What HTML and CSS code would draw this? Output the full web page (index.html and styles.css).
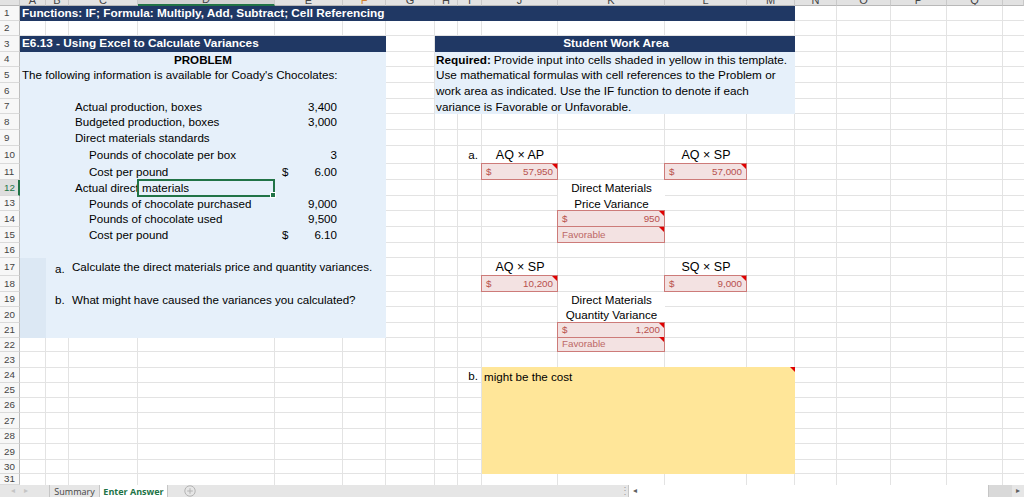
FILE: index.html
```html
<!DOCTYPE html>
<html>
<head>
<meta charset="utf-8">
<link rel="stylesheet" href="styles.css">
</head>
<body>
<div class="sheet">
  <div class="ch corner"></div>
  <div class="ch"><span>A</span></div>
  <div class="ch"><span>B</span></div>
  <div class="ch"><span>C</span></div>
  <div class="ch ch-sel"><span>D</span></div>
  <div class="ch"><span>E</span></div>
  <div class="ch"><span class="orange">F</span></div>
  <div class="ch"><span>G</span></div>
  <div class="ch"><span>H</span></div>
  <div class="ch"><span>I</span></div>
  <div class="ch"><span>J</span></div>
  <div class="ch"><span>K</span></div>
  <div class="ch"><span>L</span></div>
  <div class="ch"><span>M</span></div>
  <div class="ch"><span>N</span></div>
  <div class="ch"><span>O</span></div>
  <div class="ch"><span>P</span></div>
  <div class="ch"><span>Q</span></div>
  <div class="ch"><span></span></div>

  <div class="rh">1</div><div class="rh">2</div><div class="rh">3</div><div class="rh">4</div>
  <div class="rh">5</div><div class="rh">6</div><div class="rh">7</div><div class="rh">8</div>
  <div class="rh">9</div><div class="rh">10</div><div class="rh">11</div><div class="rh rh-sel">12</div>
  <div class="rh">13</div><div class="rh">14</div><div class="rh">15</div><div class="rh">16</div>
  <div class="rh">17</div><div class="rh">18</div><div class="rh">19</div><div class="rh">20</div>
  <div class="rh">21</div><div class="rh">22</div><div class="rh">23</div><div class="rh">24</div>
  <div class="rh">25</div><div class="rh">26</div><div class="rh">27</div><div class="rh">28</div>
  <div class="rh">29</div><div class="rh">30</div><div class="rh">31</div>

  <!-- headers -->
  <div class="cell banner y1 x-am">Functions: IF; Formula: Multiply, Add, Subtract; Cell Referencing</div>
  <div class="cell banner y3 x-af">E6.13 - Using Excel to Calculate Variances</div>
  <div class="cell banner center y3 x-hm">Student Work Area</div>

  <!-- problem panel -->
  <div class="panel y4-21 x-af"></div>
  <div class="panel-dark y17-21 x-a"></div>
  <div class="cell bold center y4 x-af">PROBLEM</div>
  <div class="cell pad2 y5 x-af">The following information is available for Coady's Chocolates:</div>

  <div class="cell ind1 y7 x-cd">Actual production, boxes</div>
  <div class="cell num y7 x-e">3,400</div>
  <div class="cell ind1 y8 x-cd">Budgeted production, boxes</div>
  <div class="cell num y8 x-e">3,000</div>
  <div class="cell ind1 y9 x-cd">Direct materials standards</div>
  <div class="cell ind2 y10 x-cd">Pounds of chocolate per box</div>
  <div class="cell num y10 x-e">3</div>
  <div class="cell ind2 y11 x-cd">Cost per pound</div>
  <div class="cell acct y11 x-e"><span>$</span><span>6.00</span></div>
  <div class="cell ind1 y12 x-cd">Actual direct materials</div>
  <div class="cell ind2 y13 x-cd">Pounds of chocolate purchased</div>
  <div class="cell num y13 x-e">9,000</div>
  <div class="cell ind2 y14 x-cd">Pounds of chocolate used</div>
  <div class="cell num y14 x-e">9,500</div>
  <div class="cell ind2 y15 x-cd">Cost per pound</div>
  <div class="cell acct y15 x-e"><span>$</span><span>6.10</span></div>

  <div class="cell letter low y17 x-b">a.</div>
  <div class="cell q y17 x-cf">Calculate the direct materials price and quantity variances.</div>
  <div class="cell letter y19 x-b">b.</div>
  <div class="cell q y19 x-cf">What might have caused the variances you calculated?</div>

  <div class="selection y12 x-d"></div>

  <!-- student work area -->
  <div class="required y4-7 x-hm">
    <div><b>Required:</b> Provide input into cells shaded in yellow in this template.</div>
    <div>Use mathematical formulas with cell references to the Problem or</div>
    <div>work area as indicated. Use the IF function to denote if each</div>
    <div>variance is Favorable or Unfavorable.</div>
  </div>

  <div class="cell label-r y10 x-i">a.</div>
  <div class="cell big center y10 x-j">AQ × AP</div>
  <div class="cell big center y10 x-l">AQ × SP</div>
  <div class="box y11 x-j"><div class="money"><span>$</span><span>57,950</span></div></div>
  <div class="box y11 x-l"><div class="money"><span>$</span><span>57,000</span></div></div>
  <div class="cell white center y12 x-k">Direct Materials</div>
  <div class="cell white center y13 x-k">Price Variance</div>
  <div class="box stack y14-15 x-k">
    <div class="money"><span>$</span><span>950</span></div>
    <div class="money fav">Favorable</div>
  </div>

  <div class="cell big center y17 x-j">AQ × SP</div>
  <div class="cell big center y17 x-l">SQ × SP</div>
  <div class="box y18 x-j"><div class="money"><span>$</span><span>10,200</span></div></div>
  <div class="box y18 x-l"><div class="money"><span>$</span><span>9,000</span></div></div>
  <div class="cell white center y19 x-k">Direct Materials</div>
  <div class="cell white center y20 x-k">Quantity Variance</div>
  <div class="box stack y21-22 x-k">
    <div class="money"><span>$</span><span>1,200</span></div>
    <div class="money fav">Favorable</div>
  </div>

  <div class="cell label-r y24 x-i">b.</div>
  <div class="answer y24-30 x-jm">might be the cost</div>
</div>

<div class="tabs">
  <div class="nav"><span>◂</span><span>▸</span></div>
  <div class="tab">Summary</div>
  <div class="tab active">Enter Answer</div>
  <div class="add">
    <svg width="12" height="12" viewBox="0 0 12 12"><circle cx="6" cy="6" r="5.2" fill="none" stroke="#b4b4b4" stroke-width="1"/><path d="M6 3.2v5.6M3.2 6h5.6" stroke="#b4b4b4" stroke-width="1"/></svg>
  </div>
  <div class="spacer"></div>
  <div class="dots">⋮</div>
  <div class="arrowbox">◂</div>
  <div class="track"><div class="thumb"></div></div>
  <div class="arrowbox right">▸</div>
</div>
</body>
</html>
```

FILE: styles.css
```css
:root {
  --gl: #e3e3e3;
  --navy: #203864;
  --panel: #e6f0fa;
  --pink: #f3e2e2;
  --pinkline: #cd7b79;
  --pinktext: #b8504d;
}
* { box-sizing: border-box; }
html, body { margin: 0; padding: 0; }
body {
  width: 1024px;
  height: 497px;
  overflow: hidden;
  background: #fff;
  font-family: "Liberation Sans", Arial, sans-serif;
  color: #000;
}

.sheet {
  display: grid;
  grid-template-columns: 20px 26px 23px 69px 137px 68px 43px 49px 23px 24px 76px 107px 82px 48px 42px 54px 56px 56px 21px;
  grid-template-rows: 6px 15px 15px 16px 15px 16px 16px 15px 16px 16px 18px 16px 16px 15px 16px 16px 15px 18px 16px 15px 16px 15px 14px 16px 15px 15px 15px 16px 15px 16px 14px 11px;
  height: 485px;
  overflow: hidden;
  background:
    linear-gradient(var(--gl), var(--gl)) 45px 0 / 1px 100% no-repeat,
    linear-gradient(var(--gl), var(--gl)) 68px 0 / 1px 100% no-repeat,
    linear-gradient(var(--gl), var(--gl)) 137px 0 / 1px 100% no-repeat,
    linear-gradient(var(--gl), var(--gl)) 274px 0 / 1px 100% no-repeat,
    linear-gradient(var(--gl), var(--gl)) 342px 0 / 1px 100% no-repeat,
    linear-gradient(var(--gl), var(--gl)) 385px 0 / 1px 100% no-repeat,
    linear-gradient(var(--gl), var(--gl)) 434px 0 / 1px 100% no-repeat,
    linear-gradient(var(--gl), var(--gl)) 457px 0 / 1px 100% no-repeat,
    linear-gradient(var(--gl), var(--gl)) 481px 0 / 1px 100% no-repeat,
    linear-gradient(var(--gl), var(--gl)) 557px 0 / 1px 100% no-repeat,
    linear-gradient(var(--gl), var(--gl)) 664px 0 / 1px 100% no-repeat,
    linear-gradient(var(--gl), var(--gl)) 746px 0 / 1px 100% no-repeat,
    linear-gradient(var(--gl), var(--gl)) 794px 0 / 1px 100% no-repeat,
    linear-gradient(var(--gl), var(--gl)) 836px 0 / 1px 100% no-repeat,
    linear-gradient(var(--gl), var(--gl)) 890px 0 / 1px 100% no-repeat,
    linear-gradient(var(--gl), var(--gl)) 946px 0 / 1px 100% no-repeat,
    linear-gradient(var(--gl), var(--gl)) 1002px 0 / 1px 100% no-repeat,
    linear-gradient(var(--gl), var(--gl)) 0 20px / 100% 1px no-repeat,
    linear-gradient(var(--gl), var(--gl)) 0 35px / 100% 1px no-repeat,
    linear-gradient(var(--gl), var(--gl)) 0 51px / 100% 1px no-repeat,
    linear-gradient(var(--gl), var(--gl)) 0 66px / 100% 1px no-repeat,
    linear-gradient(var(--gl), var(--gl)) 0 82px / 100% 1px no-repeat,
    linear-gradient(var(--gl), var(--gl)) 0 98px / 100% 1px no-repeat,
    linear-gradient(var(--gl), var(--gl)) 0 113px / 100% 1px no-repeat,
    linear-gradient(var(--gl), var(--gl)) 0 129px / 100% 1px no-repeat,
    linear-gradient(var(--gl), var(--gl)) 0 145px / 100% 1px no-repeat,
    linear-gradient(var(--gl), var(--gl)) 0 163px / 100% 1px no-repeat,
    linear-gradient(var(--gl), var(--gl)) 0 179px / 100% 1px no-repeat,
    linear-gradient(var(--gl), var(--gl)) 0 195px / 100% 1px no-repeat,
    linear-gradient(var(--gl), var(--gl)) 0 210px / 100% 1px no-repeat,
    linear-gradient(var(--gl), var(--gl)) 0 226px / 100% 1px no-repeat,
    linear-gradient(var(--gl), var(--gl)) 0 242px / 100% 1px no-repeat,
    linear-gradient(var(--gl), var(--gl)) 0 257px / 100% 1px no-repeat,
    linear-gradient(var(--gl), var(--gl)) 0 275px / 100% 1px no-repeat,
    linear-gradient(var(--gl), var(--gl)) 0 291px / 100% 1px no-repeat,
    linear-gradient(var(--gl), var(--gl)) 0 306px / 100% 1px no-repeat,
    linear-gradient(var(--gl), var(--gl)) 0 322px / 100% 1px no-repeat,
    linear-gradient(var(--gl), var(--gl)) 0 337px / 100% 1px no-repeat,
    linear-gradient(var(--gl), var(--gl)) 0 351px / 100% 1px no-repeat,
    linear-gradient(var(--gl), var(--gl)) 0 367px / 100% 1px no-repeat,
    linear-gradient(var(--gl), var(--gl)) 0 382px / 100% 1px no-repeat,
    linear-gradient(var(--gl), var(--gl)) 0 397px / 100% 1px no-repeat,
    linear-gradient(var(--gl), var(--gl)) 0 412px / 100% 1px no-repeat,
    linear-gradient(var(--gl), var(--gl)) 0 428px / 100% 1px no-repeat,
    linear-gradient(var(--gl), var(--gl)) 0 443px / 100% 1px no-repeat,
    linear-gradient(var(--gl), var(--gl)) 0 459px / 100% 1px no-repeat,
    linear-gradient(var(--gl), var(--gl)) 0 473px / 100% 1px no-repeat,
    #fff;
}

/* column headers */
.ch {
  grid-row: 1;
  background: #e2e2e2;
  border-right: 1px solid #c9c9c9;
  border-bottom: 1px solid #b8b8b8;
  overflow: hidden;
  display: flex;
  justify-content: center;
  align-items: flex-end;
  font-size: 11px;
  color: #444;
}
.ch span { display: block; line-height: 11px; margin-bottom: -1px; }
.ch .orange { color: #d08030; }
.ch.corner { background: #e2e2e2; }
.ch-sel { background: #d2d2d2; border-bottom: 2px solid #217346; }

/* row headers */
.rh {
  grid-column: 1;
  background: #f7f7f7;
  border-right: 1px solid #bdbdbd;
  border-bottom: 1px solid #dadada;
  font-size: 9.8px;
  color: #444;
  display: flex;
  align-items: center;
  padding-left: 4px;
  line-height: 1;
}
.rh-sel { background: #dedede; border-right: 2px solid #217346; color: #217346; }

/* grid placement */
.y1 { grid-row: 2; } .y3 { grid-row: 4; } .y4 { grid-row: 5; } .y5 { grid-row: 6; }
.y7 { grid-row: 8; } .y8 { grid-row: 9; } .y9 { grid-row: 10; } .y10 { grid-row: 11; }
.y11 { grid-row: 12; } .y12 { grid-row: 13; } .y13 { grid-row: 14; } .y14 { grid-row: 15; }
.y15 { grid-row: 16; } .y17 { grid-row: 18; } .y18 { grid-row: 19; } .y19 { grid-row: 20; }
.y20 { grid-row: 21; } .y24 { grid-row: 25; }
.y4-21 { grid-row: 5 / 23; }
.y17-21 { grid-row: 18 / 23; }
.y4-7 { grid-row: 5 / 9; }
.y14-15 { grid-row: 15 / 17; }
.y21-22 { grid-row: 22 / 24; }
.y24-30 { grid-row: 25 / 32; }

.x-a { grid-column: 2 / 3; }
.x-b { grid-column: 3 / 4; }
.x-d { grid-column: 5 / 6; }
.x-cd { grid-column: 4 / 6; }
.x-cf { grid-column: 4 / 8; }
.x-e { grid-column: 6 / 7; }
.x-af { grid-column: 2 / 8; }
.x-am { grid-column: 2 / 15; }
.x-hm { grid-column: 9 / 15; }
.x-i { grid-column: 10 / 11; }
.x-j { grid-column: 11 / 12; }
.x-k { grid-column: 12 / 13; }
.x-l { grid-column: 13 / 14; }
.x-jm { grid-column: 11 / 15; }

/* cells */
.cell {
  display: flex;
  align-items: center;
  font-size: 11.6px;
  line-height: 1;
  white-space: nowrap;
  min-width: 0;
}
.banner {
  background: var(--navy);
  color: #fff;
  font-weight: bold;
  font-size: 11.8px;
  padding-left: 2px;
}
.center { justify-content: center; }
.bold { font-weight: bold; }
.pad2 { padding-left: 2px; }
.ind1 { padding-left: 6px; }
.ind2 { padding-left: 20px; }
.num { justify-content: flex-end; padding-right: 6px; }
.acct { justify-content: space-between; padding-left: 7px; padding-right: 6px; }
.letter { padding-left: 9px; }
.low { align-items: flex-end; padding-bottom: 1px; }
.q { padding-left: 3px; }
.panel { background: var(--panel); }
.panel-dark { background: #dce8f4; }

.selection {
  border: 2px solid #217346;
  margin: -1px 0 -1px -1px;
  position: relative;
}
.selection::after {
  content: "";
  position: absolute;
  right: -3px;
  bottom: -3px;
  width: 4px;
  height: 4px;
  background: #217346;
  border: 1px solid #fff;
}

.required {
  background: var(--panel);
  display: grid;
  grid-template-rows: 15px 16px 16px 15px;
  font-size: 11.75px;
  line-height: 1;
  padding-left: 1px;
  white-space: nowrap;
}
.required div { display: flex; align-items: center; }
.required b { margin-right: 3px; }

.label-r { justify-content: flex-end; padding-right: 4px; }
.big { font-size: 12.5px; }
.white { background: #fff; }

.box {
  background: var(--pink);
  border: 1px solid var(--pinkline);
  margin: -1px 0 0 -1px;
  position: relative;
  color: var(--pinktext);
  font-size: 9.8px;
  display: flex;
  flex-direction: column;
}
.box::after {
  content: "";
  position: absolute;
  top: 0;
  right: 0;
  border-top: 5px solid #e00000;
  border-left: 5px solid transparent;
}
.money {
  flex: 1;
  display: flex;
  align-items: center;
  justify-content: space-between;
  padding: 0 4px 0 4px;
  line-height: 1;
}
.stack .money + .money { border-top: 1px solid var(--pinkline); }
.fav { justify-content: flex-start; color: #bd6866; }
.stack::before {
  content: "";
  position: absolute;
  top: 50%;
  right: 0;
  border-top: 5px solid #e00000;
  border-left: 5px solid transparent;
}

.answer {
  background: #ffe699;
  font-size: 11.6px;
  padding: 4px 0 0 2px;
  line-height: 1;
  position: relative;
  margin-top: -1px;
}
.answer::after {
  content: "";
  position: absolute;
  top: 0;
  right: 0;
  border-top: 5px solid #e00000;
  border-left: 5px solid transparent;
}

/* sheet tabs */
.tabs {
  height: 12px;
  background: #e6e6e6;
  display: flex;
  align-items: stretch;
  font-size: 9.5px;
  line-height: 1;
  color: #444;
}
.nav {
  width: 50px;
  display: flex;
  gap: 9px;
  padding-left: 11px;
  align-items: center;
  color: #c4c4c4;
  font-size: 8px;
  border-right: 1px solid #c6c6c6;
}
.tab {
  display: flex;
  align-items: center;
  justify-content: center;
  white-space: nowrap;
  border-right: 1px solid #c6c6c6;
  font-family: "Open Sans", "Liberation Sans", sans-serif;
  font-size: 9px;
  width: 50px;
}
.tab.active {
  background: #fff;
  color: #217346;
  font-weight: bold;
  width: 68px;
}
.add { display: flex; align-items: center; padding-left: 16px; }
.spacer { flex: 1; }
.dots { display: flex; align-items: center; color: #a0a0a0; font-size: 10px; width: 8px; }
.arrowbox {
  width: 12px;
  display: flex;
  align-items: center;
  justify-content: center;
  font-size: 8px;
  color: #606060;
  border-left: 1px solid #c6c6c6;
  background: #fff;
}
.arrowbox.right { background: #e6e6e6; border-left: 0; }
.track { width: 372px; background: #d9d9d9; display: flex; }
.thumb { width: 349px; background: #fff; border-right: 1px solid #c6c6c6; }
```
